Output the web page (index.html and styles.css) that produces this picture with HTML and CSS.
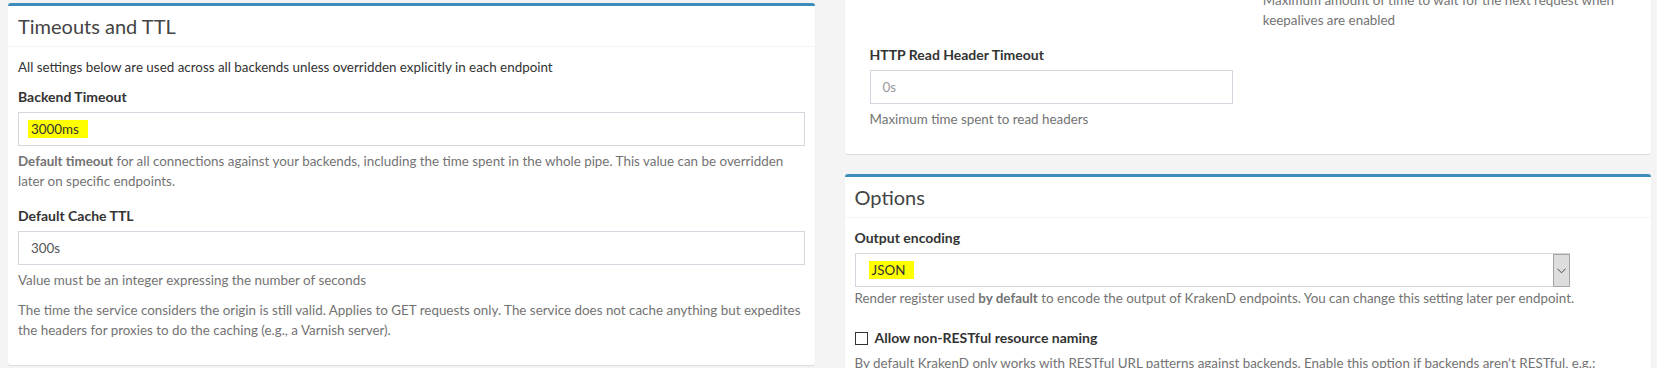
FILE: index.html
```html
<!DOCTYPE html>
<html lang="en">
<head>
<meta charset="utf-8">
<title>Service settings</title>
<link rel="stylesheet" href="styles.css">
</head>
<body>
<div class="page">
  <section class="column">
    <div class="box">
      <div class="box-header"><h3 class="box-title">Timeouts and TTL</h3></div>
      <div class="box-body">
        <p class="intro">All settings below are used across all backends unless overridden explicitly in each endpoint</p>
        <div class="form-group">
          <label class="field-label">Backend Timeout</label>
          <div class="input"><span class="hl">3000ms</span></div>
          <p class="help nowrap"><b>Default timeout</b> for all connections against your backends, including the time spent in the whole pipe. This value can be overridden<br>later on specific endpoints.</p>
        </div>
        <div class="form-group">
          <label class="field-label">Default Cache TTL</label>
          <div class="input">300s</div>
          <p class="help">Value must be an integer expressing the number of seconds</p>
          <p class="help nowrap">The time the service considers the origin is still valid. Applies to GET requests only. The service does not cache anything but expedites<br>the headers for proxies to do the caching (e.g., a Varnish server).</p>
        </div>
      </div>
    </div>
  </section>
  <section class="column">
    <div class="box box-cut">
      <div class="box-body">
        <div class="row">
          <div class="cell"></div>
          <div class="cell">
            <div class="form-group">
              <p class="help help-flush nowrap">Maximum amount of time to wait for the next request when<br>keepalives are enabled</p>
            </div>
          </div>
        </div>
        <div class="row">
          <div class="cell">
            <div class="form-group">
              <label class="field-label">HTTP Read Header Timeout</label>
              <div class="input placeholder">0s</div>
              <p class="help">Maximum time spent to read headers</p>
            </div>
          </div>
          <div class="cell"></div>
        </div>
      </div>
    </div>
    <div class="box">
      <div class="box-header"><h3 class="box-title">Options</h3></div>
      <div class="box-body">
        <div class="form-group">
          <label class="field-label">Output encoding</label>
          <div class="select">
            <span class="select-value"><span class="hl">JSON</span></span>
            <span class="select-arrow"><svg width="9" height="6" viewBox="0 0 9 6"><polyline points="0.5,0.8 4.5,4.8 8.5,0.8" fill="none" stroke="#444" stroke-width="1"/></svg></span>
          </div>
          <p class="help help-tight nowrap">Render register used <b>by default</b> to encode the output of KrakenD endpoints. You can change this setting later per endpoint.</p>
        </div>
        <div class="checkbox">
          <label class="check-label"><span class="check-box"></span>Allow non-RESTful resource naming</label>
          <p class="help nowrap">By default KrakenD only works with RESTful URL patterns against backends. Enable this option if backends aren't RESTful, e.g.:</p>
        </div>
      </div>
    </div>
  </section>
</div>
</body>
</html>
```

FILE: styles.css
```css
html, body {
  margin: 0;
  padding: 0;
}

body {
  background: #f4f4f4;
  font-family: Lato, "Open Sans", sans-serif;
  font-size: 13.4px;
  line-height: 20px;
  color: #333;
  overflow: hidden;
}

.page {
  display: flex;
  gap: 30px;
  padding: 3px 6px 0 8px;
}

.column {
  flex: 1;
  min-width: 0;
}

.box {
  background: #fff;
  border-top: 3px solid #3c8dbc;
  border-radius: 3px;
  box-shadow: 0 1px 1px rgba(0, 0, 0, 0.1);
  margin-bottom: 20px;
}

.box-cut {
  margin-top: -26px;
}

.box-header {
  padding: 10px;
  border-bottom: 1px solid #f4f4f4;
}

.box-title {
  margin: 0;
  font-size: 20px;
  line-height: 20px;
  font-weight: 400;
  color: #444;
}

.box-body {
  padding: 10px;
}

.intro {
  margin: 0 0 10px;
}

.form-group {
  margin-bottom: 15px;
}

.field-label {
  display: block;
  font-size: 14px;
  font-weight: 700;
  margin-bottom: 5px;
}

.input {
  box-sizing: border-box;
  height: 34px;
  border: 1px solid #d2d6de;
  padding: 6px 12px;
  color: #555;
}

.placeholder {
  color: #999;
}

.help {
  margin: 5px 0 10px;
  color: #737373;
}

.help b {
  font-weight: 700;
}

.help-flush {
  margin-top: 0;
}

.help-tight {
  margin-top: 1px;
}

.nowrap {
  white-space: nowrap;
}

.hl {
  background: #ffff00;
  color: #333;
  padding: 1px 9px 1px 3px;
  margin-left: -3px;
}

.row {
  display: grid;
  grid-template-columns: 1fr 1fr;
  column-gap: 30px;
  padding: 0 15px;
}

.cell {
  min-width: 0;
}

.select {
  box-sizing: border-box;
  width: 715px;
  height: 34px;
  border: 1px solid #d2d6de;
  display: flex;
  align-items: center;
  color: #333;
}

.select-value {
  flex: 1;
  padding-left: 16px;
}

.select-arrow {
  box-sizing: border-box;
  width: 17px;
  height: 33px;
  margin-right: -1px;
  align-self: flex-start;
  background: #dddddd;
  border: 1px solid #a6a6a6;
  display: flex;
  align-items: center;
  justify-content: center;
}

.checkbox {
  margin-top: 20px;
}

.check-label {
  display: flex;
  align-items: center;
  gap: 7px;
  font-size: 14px;
  font-weight: 700;
}

.check-box {
  box-sizing: border-box;
  width: 13px;
  height: 13px;
  border: 1px solid #333;
  background: #fff;
}
```
